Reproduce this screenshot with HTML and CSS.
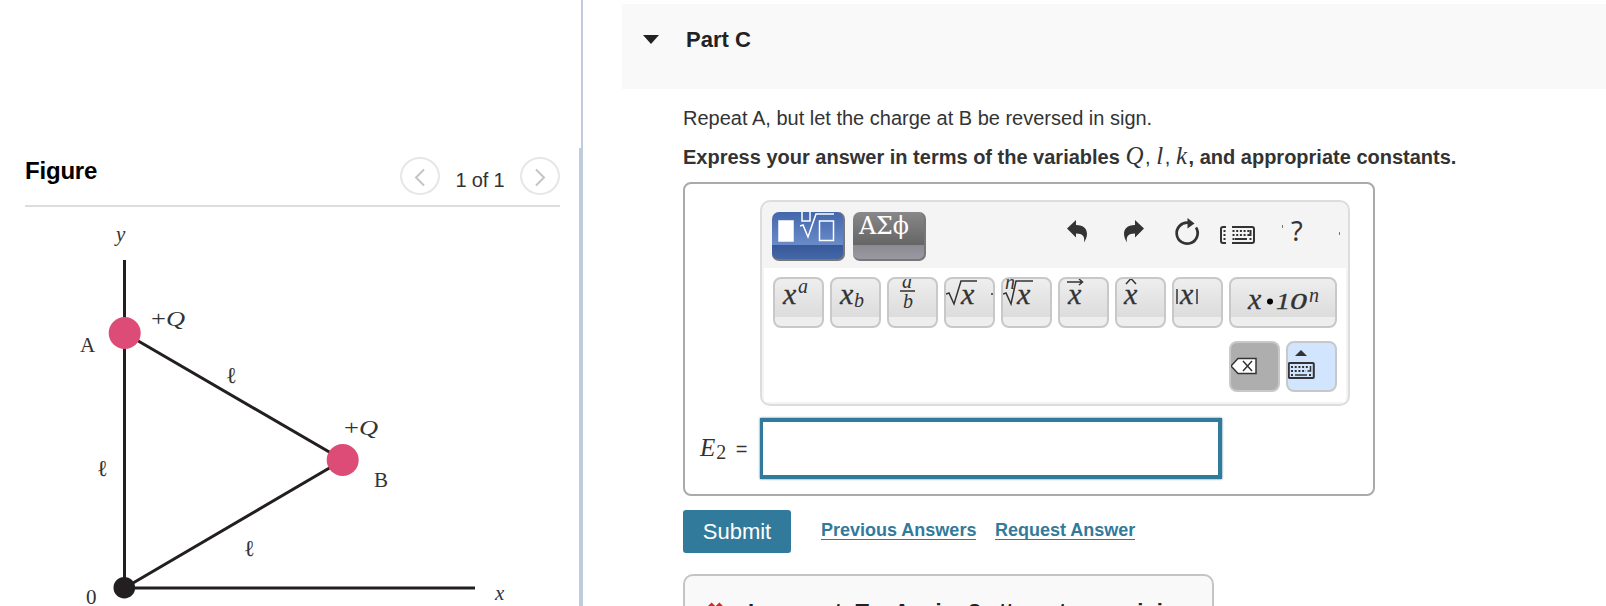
FILE: index.html
```html
<!DOCTYPE html>
<html lang="en">
<head>
    <meta charset="UTF-8">
    <meta name="viewport" content="width=device-width, initial-scale=1.0">
    <title>Part C</title>
    <link rel="stylesheet" href="styles.css">
</head>
<body>
    <div id="app">
        <aside id="figure-panel">
            <div class="panel-top"></div>
            <div class="panel-body">
                <div class="figure-header">
                    <h2>Figure</h2>
                    <div class="pager">
                        <button class="pager-btn"><svg width="36" height="34" viewBox="0 0 36 34"><path d="M22 10.500l-8 8 8 8"/></svg></button>
                        <span>1 of 1</span>
                        <button class="pager-btn"><svg width="36" height="34" viewBox="0 0 36 34"><path d="M14 10.500l8 8-8 8"/></svg></button>
                    </div>
                </div>
                <svg class="diagram" width="535" height="399" viewBox="25 207 535 399">
                    <g class="lines">
                        <path d="M124.500 260V588H475"/>
                        <path d="M124.500 333L343 460L124.500 588"/>
                    </g>
                    <circle class="charge" cx="124.700" cy="333" r="16"/>
                    <circle class="charge" cx="342.700" cy="460" r="16"/>
                    <circle class="origin" cx="124.300" cy="587.700" r="10.800"/>
                    <text class="it" x="116" y="241">y</text>
                    <text x="151" y="326" textLength="34" lengthAdjust="spacingAndGlyphs">+<tspan class="it">Q</tspan></text>
                    <text x="80" y="352">A</text>
                    <text class="ell" x="226" y="383">ℓ</text>
                    <text class="ell" x="97" y="475.500">ℓ</text>
                    <text class="ell" x="244" y="556">ℓ</text>
                    <text x="344" y="435" textLength="34" lengthAdjust="spacingAndGlyphs">+<tspan class="it">Q</tspan></text>
                    <text x="374" y="487">B</text>
                    <text x="86" y="604">0</text>
                    <text class="it" x="495" y="600">x</text>
                </svg>
            </div>
        </aside>

        <main>
            <header>
                <span class="caret"></span>
                <h1>Part C</h1>
            </header>
            <section class="question">
                <p class="prompt">Repeat A, but let the charge at B be reversed in sign.</p>
                <p class="instructions"><b>Express your answer in terms of the variables</b> <i>Q</i>, <i>l</i>, <i>k</i><b>, and appropriate constants.</b></p>

                <div class="answer-box">
                    <div class="palette">
                        <div class="toolbar">
                            <button class="tab tab-math">
                                <svg width="71" height="47" viewBox="0 0 71 47">
                                    <path class="fill" d="M7 9h14v20H7z"/>
                                    <path d="M28 14l3-1 5 12L44 2h18M30 0v9h8V0M47.500 9h14v19.500h-14z"/>
                                </svg>
                            </button>
                            <button class="tab tab-greek">
                                <svg width="71" height="47" viewBox="0 0 71 47"><text x="6" y="22" textLength="50" lengthAdjust="spacingAndGlyphs">ΑΣϕ</text></svg>
                            </button>
                            <svg class="tools" width="280" height="62" viewBox="1060 202 280 62">
                                <path class="solid" d="M1067 228.500l9-8.500v5c8 0 11 4 11 9 0 3-1.500 6-3 8.500 1-6-1-9-8-9v4z"/>
                                <path class="solid" d="M1144 228.500l-9-8.500v5c-8 0-11 4-11 9 0 3 1.500 6 3 8.500-1-6 1-9 8-9v4z"/>
                                <path class="ring" d="M1196 227.500a10.500 10.500 0 1 1-8-4.800"/>
                                <path class="solid" d="M1187.500 218l7 5.500-7 5z"/>
                                <path class="edge" d="M1226 227h-3q-2 0-2 2v12q0 2 2 2h3M1232 227h20q2 0 2 2v12q0 2-2 2h-20"/>
                                <path class="keys" d="M1223.500 231h2M1223.500 235h2M1223.500 239h2M1232.500 231h17M1232.500 235h15M1232.500 239h3M1249.500 239h2"/>
                                <path class="edge" d="M1235 239h12M1250.500 230v5h-3"/>
                                <path class="tick" d="M1282.500 225v3M1339.500 232v3"/>
                                <text x="1291" y="241">?</text>
                            </svg>
                        </div>
                        <div class="keypad">
                            <div class="row">
                                <button class="key"><svg width="47" height="47" viewBox="0 0 47 47"><text x="8" y="24.500">x</text><text class="small" x="23" y="13.500">a</text></svg></button>
                                <button class="key"><svg width="47" height="47" viewBox="0 0 47 47"><text x="8" y="24.500">x</text><text class="small" x="22" y="27.500">b</text></svg></button>
                                <button class="key"><svg width="47" height="47" viewBox="0 0 47 47"><text class="small" x="13" y="9">a</text><path d="M11 12h15"/><text class="small" x="14" y="28.500">b</text></svg></button>
                                <button class="key"><svg width="47" height="47" viewBox="0 0 47 47"><path d="M0 15l3-1 5 11L15 2h16"/><text x="15" y="24.500">x</text><path d="M46 14v2"/></svg></button>
                                <button class="key"><svg width="47" height="47" viewBox="0 0 47 47"><path d="M0 15l3-1 5 11L13 2h17"/><text x="14" y="24.500">x</text><text class="small" x="2" y="10">n</text></svg></button>
                                <button class="key"><svg width="47" height="47" viewBox="0 0 47 47"><text x="8" y="24.500">x</text><path d="M7 3h15M19 0l3.500 3-3.500 3"/></svg></button>
                                <button class="key"><svg width="47" height="47" viewBox="0 0 47 47"><text x="7" y="24.500">x</text><path d="M9 5L14 -.5l5 5.500"/></svg></button>
                                <button class="key"><svg width="47" height="47" viewBox="0 0 47 47"><path d="M3 10v15M23 10v15"/><text x="6" y="24.500">x</text></svg></button>
                                <button class="key wide"><svg width="104" height="47" viewBox="0 0 104 47"><text x="17" y="29.500">x</text><circle cx="39" cy="22.500" r="3"/><text class="one" x="45" y="29.500" textLength="14" lengthAdjust="spacingAndGlyphs">1</text><text class="zero" x="59" y="29.500" textLength="17" lengthAdjust="spacingAndGlyphs">0</text><text class="small" x="78" y="23">n</text></svg></button>
                            </div>
                            <div class="row row-end">
                                <button class="key key-delete"><svg width="47" height="47" viewBox="0 0 47 47"><path class="white" d="M0 23l7-7.500h18v15H7z"/><path d="M12 18l9 10M21 18l-9 10"/></svg></button>
                                <button class="key key-board"><svg width="47" height="47" viewBox="0 0 47 47"><path class="solid" d="M7 13l6-6 6 6z"/><rect class="board" x=".8" y="20" width="25" height="15" rx="1"/><path class="keys" d="M3 24h18M3 28h15M3 32h2M21 32h2"/><path d="M7 32h12M22.500 23v5h-3"/></svg></button>
                            </div>
                        </div>
                    </div>
                    <div class="entry">
                        <label for="answer"><i>E</i><sub>2</sub> <span>=</span></label>
                        <input type="text" id="answer">
                    </div>
                </div>

                <div class="actions">
                    <button class="submit">Submit</button>
                    <a href="#">Previous Answers</a>
                    <a href="#">Request Answer</a>
                </div>

                <div class="feedback">
                    <svg width="21" height="21" viewBox="0 0 21 21"><path d="M4.500 4.500l12 12M16.500 4.500l-12 12"/></svg>
                    <span>Incorrect; Try Again; 8 attempts remaining</span>
                </div>
            </section>
        </main>
    </div>
</body>
</html>
```
FILE: styles.css
```css
* {
    box-sizing: border-box;
}

body {
    font-family: "Liberation Sans", Arial, sans-serif;
    margin: 0;
    background: #fff;
    color: #333;
    font-size: 20px;
}

#app {
    display: flex;
    height: 606px;
    overflow: hidden;
}

h1, h2, p {
    margin: 0;
}

button {
    font-family: inherit;
    padding: 0;
    margin: 0;
    display: block;
}

svg {
    display: block;
}

/* Figure panel */
#figure-panel {
    width: 583px;
    flex-shrink: 0;
}

.panel-top {
    height: 148px;
    border-right: 2px solid #bfccde;
}

.panel-body {
    height: 458px;
    padding-left: 25px;
    border-right: 4px solid #bfccde;
}

.figure-header {
    display: flex;
    justify-content: space-between;
    width: 535px;
    height: 59px;
    padding-top: 9px;
    border-bottom: 2px solid #ddd;
}

.figure-header h2 {
    font-size: 24px;
    line-height: 28px;
    color: #000;
    letter-spacing: -0.2px;
}

.pager {
    display: flex;
    color: #333;
}

.pager span {
    width: 80px;
    text-align: center;
    line-height: 46px;
    font-size: 20px;
    letter-spacing: -0.2px;
}

.pager-btn {
    width: 40px;
    height: 38px;
    border: 2px solid #e6e6e6;
    border-radius: 50%;
    background: #fff;
}

.pager-btn path {
    fill: none;
    stroke: #c4c4c4;
    stroke-width: 2;
}

.diagram text {
    font-family: "Liberation Serif", serif;
    font-size: 21px;
    fill: #333;
}

.diagram .it {
    font-style: italic;
}

.diagram .ell {
    font-family: "DejaVu Serif", serif;
    font-size: 23px;
}

.lines path {
    fill: none;
    stroke: #231f20;
    stroke-width: 3;
}

.charge {
    fill: #dd4b77;
}

.origin {
    fill: #231f20;
}

/* Question */
main {
    flex: 1;
    padding: 4px 0 0 39px;
}

header {
    display: flex;
    align-items: flex-start;
    height: 85px;
    padding-left: 21px;
    background: #f9f9f9;
}

.caret {
    margin: 31px 27px 0 0;
    border: 8px solid transparent;
    border-top: 9px solid #222;
    border-bottom: 0;
}

h1 {
    padding-top: 23px;
    font-size: 22px;
    line-height: 26px;
    color: #222;
}

.question {
    padding-left: 61px;
}

.prompt {
    padding-top: 17px;
    line-height: 24px;
    white-space: nowrap;
}

.instructions {
    height: 52px;
    padding-top: 15px;
    line-height: 24px;
    white-space: nowrap;
}

.instructions i,
.entry i {
    font-family: "Liberation Serif", serif;
    font-size: 25px;
    line-height: 20px;
}

.instructions i {
    margin-right: 1.6px;
}

.answer-box {
    width: 692px;
    height: 314px;
    padding: 16px 0 0 75px;
    border: 2px solid #aaa;
    border-radius: 8px;
}

.palette {
    width: 590px;
    height: 206px;
    padding: 0 2px 2px;
    border: 2px solid #ddd;
    border-radius: 10px;
    background: #f4f4f4;
}

.toolbar {
    display: flex;
    height: 66px;
    padding-left: 8px;
}

.tab {
    width: 73px;
    height: 49px;
    margin: 10px 8px 0 0;
    border: 0 solid #777;
    border-width: 0 2px 2px 0;
    border-radius: 7px;
    overflow: hidden;
}

.tab-math {
    background: linear-gradient(#4467aa, #698bca 33px, #37599a 33px, #4467a8);
}

.tab-greek {
    background: linear-gradient(#88888a, #656565 33px, #8b8991 33px, #9a99a1);
}

.tab path {
    fill: none;
    stroke: #fff;
    stroke-width: 1.5;
}

.tab .fill {
    fill: #fff;
}

.tab text {
    font-family: "DejaVu Serif", serif;
    font-size: 24px;
    fill: #fff;
}

.tools {
    margin-left: 126px;
    fill: #333;
}

.tools .ring {
    fill: none;
    stroke: #333;
    stroke-width: 2.7;
}

.tools .edge {
    fill: none;
    stroke: #333;
    stroke-width: 2;
}

.keys {
    fill: none;
    stroke: #333;
    stroke-width: 2;
    stroke-dasharray: 2 1.7;
}

.tick {
    stroke: #777;
}

.tools text {
    font-family: "Noto Sans", sans-serif;
    font-size: 27px;
}

.keypad {
    height: 134px;
    padding: 9px;
    background: #fff;
}

.row {
    display: flex;
    gap: 6px;
}

.row-end {
    justify-content: flex-end;
    margin-top: 13px;
}

.key {
    width: 51px;
    height: 51px;
    flex-shrink: 0;
    border: 2px solid #c8c8c8;
    border-radius: 8px;
    background: linear-gradient(#eee, #dcdcdc 38px, #eee 38px, #eee);
    overflow: hidden;
}

.key.wide {
    width: 108px;
}

.key text {
    font-family: "Liberation Serif", serif;
    font-style: italic;
    font-size: 30px;
    fill: #333;
    stroke: #333;
    stroke-width: 0.3;
}

.key .small {
    font-size: 20px;
    stroke: none;
}

/* short digits, the height of the x */
.key .one,
.key .zero {
    font-size: 23px;
}

.key path {
    fill: none;
    stroke: #333;
    stroke-width: 1.5;
}

.key .solid {
    fill: #333;
    stroke: none;
}

.key .white {
    fill: #fff;
}

.key .keys {
    stroke-width: 2;
}

.key-delete {
    background: #aeaeae;
}

.key-board {
    background: #d1e5fe;
}

.board {
    fill: none;
    stroke: #333;
    stroke-width: 2;
}

.entry {
    display: flex;
    align-items: center;
    margin: 12px 0 0 -60px;
}

.entry label {
    width: 60px;
    white-space: nowrap;
    line-height: 28px;
}

.entry i {
    margin-right: 1px;
}

.entry sub {
    font-family: "Liberation Serif", serif;
    font-size: 20px;
    line-height: 0;
    vertical-align: -3px;
}

.entry span {
    margin-left: 4px;
}

.entry input {
    width: 462px;
    height: 61px;
    border: 4px solid #327a9b;
    border-left-width: 3px;
    box-shadow: 0 0 2px #327a9b;
    outline: none;
}

.actions {
    display: flex;
    align-items: flex-start;
    margin-top: 14px;
}

.submit {
    width: 108px;
    height: 43px;
    margin-right: 30px;
    border: 0;
    border-radius: 3px;
    background: #327a9b;
    color: #fff;
    font-size: 22px;
    line-height: 40px;
}

.actions a {
    margin: 11px 18.500px 0 0;
    border-bottom: 1px solid #327a9b;
    color: #327a9b;
    font-size: 18px;
    font-weight: bold;
    line-height: 18px;
    text-decoration: none;
}

.feedback {
    display: flex;
    width: 531px;
    height: 80px;
    margin-top: 21px;
    padding: 23px 0 0 20px;
    border: 2px solid #c4c4c4;
    border-radius: 10px;
    background: #f9f9f9;
    color: #222;
    font-size: 22px;
    font-weight: bold;
    white-space: nowrap;
}

.feedback svg {
    margin: 1px 22px 0 0;
}

.feedback path {
    stroke: #d02b2f;
    stroke-width: 6;
}
```
